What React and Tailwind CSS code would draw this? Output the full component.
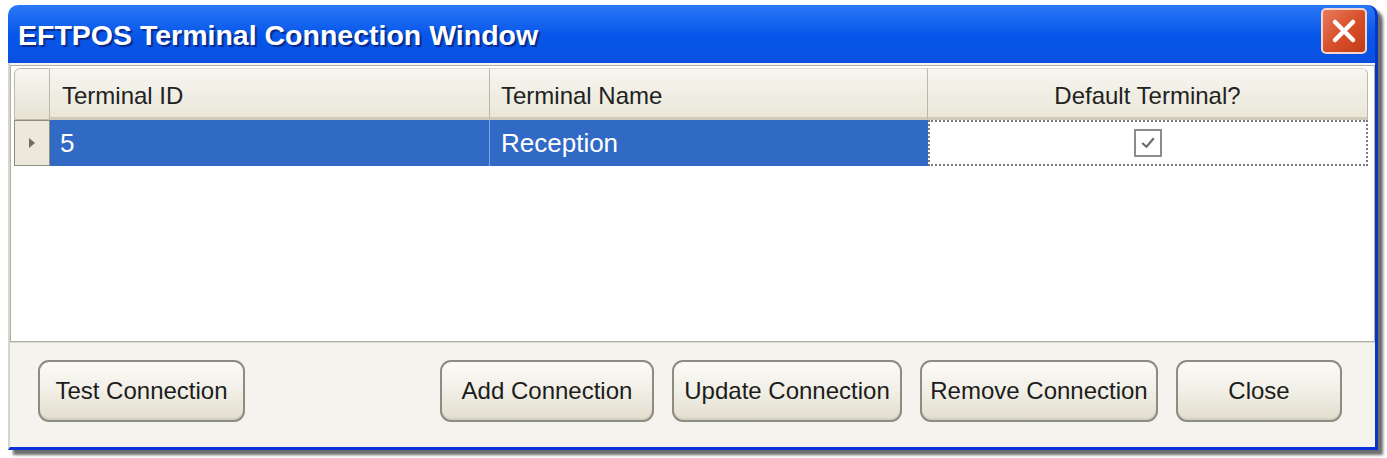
import React from 'react';

const uiFont = { fontFamily: '"Liberation Sans", Arial, sans-serif' };

const columns = [
    { label: 'Terminal ID', width: 'w-[440px]', align: 'justify-start pl-[12px]' },
    { label: 'Terminal Name', width: 'w-[438px]', align: 'justify-start pl-[11px]' },
    { label: 'Default Terminal?', width: 'w-[440px]', align: 'justify-center' },
];

const XpButton = ({ children, width }) => (
    <button
        className={`${width} h-[62px] rounded-[11px] border-2 border-[#8e8b80] bg-gradient-to-b from-[#fbfaf6] via-[#f1efe6] to-[#e2ddcf] text-[24px] text-[#1c1c1c] flex items-center justify-center shadow-[inset_0_-2px_0_rgba(0,0,0,0.06)]`}
    >
        {children}
    </button>
);

const App = () => {
    return (
        <div className="w-[1387px] h-[458px] bg-white overflow-hidden" style={uiFont}>
            <div className="ml-[8px] mt-[5px] w-[1370px] h-[445px] flex flex-col rounded-t-[10px] shadow-[5px_5px_3px_rgba(60,60,60,0.75)]">
                {/* title bar */}
                <div className="h-[58px] rounded-t-[10px] bg-gradient-to-b from-[#2a78f6] via-[#0757ea] to-[#0a4fe0] flex items-center justify-between pl-[10px] pr-[8px] border-r-[3px] border-[#0836c8]">
                    <span className="text-white font-bold text-[28.5px] [text-shadow:2px_2px_1px_#0a2a8a] pt-[3px]">
                        EFTPOS Terminal Connection Window
                    </span>
                    <div className="w-[46px] h-[46px] mt-[-6px] rounded-[5px] border-2 border-[#f3d7cc] bg-gradient-to-br from-[#e8795a] via-[#d8502a] to-[#c03c18] flex items-center justify-center">
                        <svg width="30" height="30" viewBox="0 0 30 30">
                            <path d="M6 6 L24 24 M24 6 L6 24" stroke="#fff" strokeWidth="4.5" strokeLinecap="round" />
                        </svg>
                    </div>
                </div>

                {/* body */}
                <div className="flex-1 flex flex-col bg-[#f4f3ee] border-l-[2px] border-l-[#d8d6cc] border-r-[3px] border-r-[#0836c8] border-b-[3px] border-b-[#0831d9]">
                    {/* grid */}
                    <div className="h-[277px] mt-[2px] border border-[#b3b0a3] bg-white pl-[3px] pt-[2px]">
                        <div className="flex h-[52px]">
                            <div className="w-[36px] rounded-tl-[6px] border border-[#bdb9a9] bg-gradient-to-b from-[#f7f6f0] to-[#e6e3d4]" />
                            {columns.map((col, i) => (
                                <div
                                    key={col.label}
                                    className={`${col.width} flex items-center ${col.align} pt-[6px] border-b-[3px] border-b-[#cfcbbb] border-t border-t-[#e0ddd0] ${i < 2 ? 'border-r border-r-[#bcb8a6]' : 'border-r border-r-[#bcb8a6] rounded-tr-[6px]'} bg-gradient-to-b from-[#f6f5ef] to-[#ebe8da] text-[24px] text-[#222]`}
                                >
                                    {col.label}
                                </div>
                            ))}
                        </div>
                        <div className="flex h-[46px]">
                            <div className="w-[36px] border border-[#8f8c80] bg-[#ece9dc] flex items-center justify-center">
                                <svg width="10" height="14" viewBox="0 0 10 14">
                                    <path d="M2 2 L8 7 L2 12 Z" fill="#6e6c64" />
                                </svg>
                            </div>
                            <div className="w-[440px] bg-[#316ac5] border-r border-r-[#7fa6e6] text-white text-[26px] flex items-center pl-[10px]">5</div>
                            <div className="w-[438px] bg-[#316ac5] text-white text-[26px] flex items-center pl-[11px]">Reception</div>
                            <div className="w-[440px] bg-white border-2 border-dotted border-[#7a7a7a] flex items-center justify-center">
                                <div className="w-[28px] h-[28px] border-2 border-[#8c8c88] bg-white flex items-center justify-center">
                                    <svg width="18" height="18" viewBox="0 0 17 17">
                                        <path d="M3 8.5 L7 12 L14 4" stroke="#6a6a66" strokeWidth="2" fill="none" />
                                    </svg>
                                </div>
                            </div>
                        </div>
                    </div>

                    {/* buttons */}
                    <div className="flex-1 flex items-start pt-[17px] pl-[28px] pr-[33px] border-t border-t-[#dedcd2]">
                        <XpButton width="w-[207px]">Test Connection</XpButton>
                        <div className="ml-auto flex gap-[18px]">
                            <XpButton width="w-[214px]">Add Connection</XpButton>
                            <XpButton width="w-[230px]">Update Connection</XpButton>
                            <XpButton width="w-[238px]">Remove Connection</XpButton>
                            <XpButton width="w-[166px]">Close</XpButton>
                        </div>
                    </div>
                </div>
            </div>
        </div>
    );
};

export default App;
